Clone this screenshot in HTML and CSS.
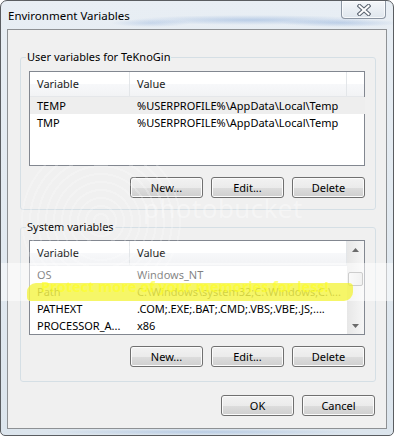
FILE: index.html
```html
<!DOCTYPE html>
<html>
<head>
<meta charset="utf-8">
<title>Environment Variables</title>
<link rel="stylesheet" href="styles.css">
</head>
<body>
<div class="window">
  <div class="titlebar">
    <span class="title">Environment Variables</span>
    <div class="close">
      <svg width="14" height="12" viewBox="0 0 14 12">
        <path d="M2.5 2 L11.5 10 M11.5 2 L2.5 10" stroke="#5d6672" stroke-width="4.2" stroke-linecap="square" fill="none"/>
        <path d="M2.5 2 L11.5 10 M11.5 2 L2.5 10" stroke="#ffffff" stroke-width="2" stroke-linecap="square" fill="none"/>
      </svg>
    </div>
  </div>
  <div class="client">
    <fieldset class="group user">
      <legend>User variables for TeKnoGin</legend>
      <div class="list">
        <div class="main">
          <div class="hdr full"><div class="hc c1">Variable</div><div class="hc c2">Value</div><div class="hc c3"></div></div>
          <div class="row sel"><div class="c1">TEMP</div><div class="c2">%USERPROFILE%\AppData\Local\Temp</div></div>
          <div class="row"><div class="c1">TMP</div><div class="c2">%USERPROFILE%\AppData\Local\Temp</div></div>
        </div>
      </div>
      <div class="buttons">
        <button class="btn">New...</button>
        <button class="btn">Edit...</button>
        <button class="btn">Delete</button>
      </div>
    </fieldset>
    <fieldset class="group sys">
      <legend>System variables</legend>
      <div class="list">
        <div class="main">
          <div class="hdr"><div class="hc c1">Variable</div><div class="hc c2">Value</div></div>
          <div class="row"><div class="c1">OS</div><div class="c2">Windows_NT</div></div>
          <div class="row"><div class="c1">Path</div><div class="c2">C:\Windows\system32;C:\Windows;C:\...</div></div>
          <div class="row"><div class="c1">PATHEXT</div><div class="c2">.COM;.EXE;.BAT;.CMD;.VBS;.VBE;.JS;....</div></div>
          <div class="row"><div class="c1">PROCESSOR_A...</div><div class="c2">x86</div></div>
        </div>
        <div class="vscroll">
          <div class="arrow"><svg width="7" height="4" viewBox="0 0 7 4"><path d="M0 4 L3.5 0 L7 4 Z" fill="#6b6b6b"/></svg></div>
          <div class="track"><div class="thumb"></div></div>
          <div class="arrow"><svg width="7" height="4" viewBox="0 0 7 4"><path d="M0 0 L7 0 L3.5 4 Z" fill="#6b6b6b"/></svg></div>
        </div>
      </div>
      <div class="buttons">
        <button class="btn">New...</button>
        <button class="btn">Edit...</button>
        <button class="btn">Delete</button>
      </div>
    </fieldset>
    <div class="dlg-buttons">
      <button class="btn">OK</button>
      <button class="btn">Cancel</button>
    </div>
  </div>
  <div class="wm-rings"></div>
  <div class="wm-logo">photobucket</div>
  <div class="wm-band"></div>
  <div class="wm-hl"></div>
  <div class="wm-text">Protect more of your memories for less!</div>
</div>
</body>
</html>
```

FILE: styles.css
```css
* { box-sizing: border-box; }
html, body { margin: 0; padding: 0; background: #ffffff; }
body {
  width: 394px;
  height: 436px;
  font-family: "Noto Sans", "Open Sans", sans-serif;
  font-size: 11px;
  color: #000;
}
.window {
  position: relative;
  width: 394px;
  height: 436px;
  border: 1px solid #5a5d61;
  border-radius: 7px 7px 5px 5px;
  padding: 0 6px 6px 6px;
  display: flex;
  flex-direction: column;
  overflow: hidden;
  background:
    radial-gradient(ellipse 120px 5px at 250px 19px, rgba(80,130,200,0.30), transparent),
    radial-gradient(ellipse 60px 4px at 340px 22px, rgba(80,130,200,0.28), transparent),
    radial-gradient(ellipse 40px 4px at 150px 22px, rgba(80,130,200,0.22), transparent),
    radial-gradient(ellipse 160px 3px at 200px 431px, rgba(80,130,200,0.25), transparent),
    linear-gradient(#e8eef4, #dce5ed);
}
.titlebar {
  height: 28px;
  display: flex;
  align-items: flex-start;
  justify-content: space-between;
}
.title {
  margin: 7px 0 0 1px;
  font-size: 11.5px;
  line-height: 16px;
  color: #000;
}
.close {
  width: 45px;
  height: 18px;
  margin-right: 1px;
  border: 1px solid #8b95a2;
  border-top: none;
  border-radius: 0 0 4px 4px;
  background: linear-gradient(#f4f7fa, #dfe6ed);
  box-shadow: inset 0 0 0 1px rgba(255,255,255,0.7);
  display: flex;
  align-items: center;
  justify-content: center;
}
.client {
  flex: 1;
  border: 1px solid #8e9194;
  background: #f0f0f0;
  padding: 19px 10px 0 12px;
  display: flex;
  flex-direction: column;
}
.group {
  margin: 0;
  min-width: 0;
  border: 1px solid #d5dfe5;
  border-radius: 3px;
  padding: 6px 10px 11px 8px;
}
.group legend {
  padding: 0 1px;
  margin-left: -3px;
  line-height: 16px;
}
.group.sys {
  margin-top: 9px;
  padding-top: 5px;
  padding-bottom: 14px;
}
.list {
  height: 95px;
  border: 1px solid #828790;
  background: #fff;
  display: flex;
}
.main { flex: 1; }
.hdr {
  height: 25px;
  display: grid;
  grid-template-columns: 100px 217px;
  background: linear-gradient(#ffffff, #ffffff 50%, #f7f8fa 50%, #f2f3f5);
  border-bottom: 1px solid #e5e7ea;
}
.hdr.full { grid-template-columns: 100px 217px 1fr; }
.hc {
  padding-left: 7px;
  line-height: 24px;
  color: #1b1b1b;
  border-right: 1px solid #e3e6e9;
}
.hc.c3 { border-right: none; }
.row {
  height: 17px;
  display: grid;
  grid-template-columns: 100px 217px;
  line-height: 17px;
  white-space: nowrap;
}
.row div { padding-left: 7px; overflow: hidden; }
.row.sel { background: #eeeeee; margin-right: -1px; }
.vscroll {
  width: 17px;
  display: flex;
  flex-direction: column;
  background: linear-gradient(90deg, #e7e7e7, #f6f6f6);
}
.arrow {
  height: 17px;
  display: flex;
  align-items: center;
  justify-content: center;
}
.track { flex: 1; }
.thumb {
  margin: 14px 0 0 1px;
  width: 15px;
  height: 14px;
  border: 1px solid #9a9a9a;
  border-radius: 2px;
  background: linear-gradient(90deg, #f4f4f4, #e4e4e4);
}
.buttons {
  margin-top: 11px;
  display: flex;
  justify-content: flex-end;
  gap: 8px;
}
.btn {
  width: 73px;
  height: 21px;
  padding: 0;
  border: 1px solid #707070;
  border-radius: 3px;
  background: linear-gradient(#f2f2f2 0%, #ebebeb 50%, #dddddd 50%, #cfcfcf 100%);
  box-shadow: inset 0 0 0 1px #fbfbfb;
  font-family: inherit;
  font-size: 11px;
  line-height: 19px;
  color: #000;
}
.dlg-buttons {
  margin-top: 13px;
  padding-right: 1px;
  display: flex;
  justify-content: flex-end;
  gap: 8px;
}
.wm-rings {
  position: absolute;
  left: 20px;
  top: 140px;
  width: 160px;
  height: 160px;
  border-radius: 50%;
  background: repeating-radial-gradient(circle, transparent 0 6px, rgba(255,255,255,0.22) 6px 8px);
  pointer-events: none;
}
.wm-logo {
  position: absolute;
  left: 142px;
  top: 198px;
  font-family: "Open Sans", sans-serif;
  font-size: 26px;
  line-height: 18px;
  letter-spacing: 0.5px;
  color: rgba(255,255,255,0.4);
  pointer-events: none;
}
.wm-band {
  position: absolute;
  left: 0;
  right: 0;
  top: 262px;
  height: 38px;
  background: rgba(255,255,255,0.5);
  pointer-events: none;
}
.wm-hl {
  position: absolute;
  left: 26px;
  top: 282px;
  width: 326px;
  height: 18px;
  border-radius: 9px 4px 9px 4px;
  background: rgba(242,242,40,0.7);
  pointer-events: none;
}
.wm-text {
  position: absolute;
  left: 40px;
  top: 276px;
  font-family: "Open Sans", sans-serif;
  font-weight: bold;
  font-size: 14.5px;
  white-space: nowrap;
  color: rgba(255,255,30,0.6);
  pointer-events: none;
}
```
